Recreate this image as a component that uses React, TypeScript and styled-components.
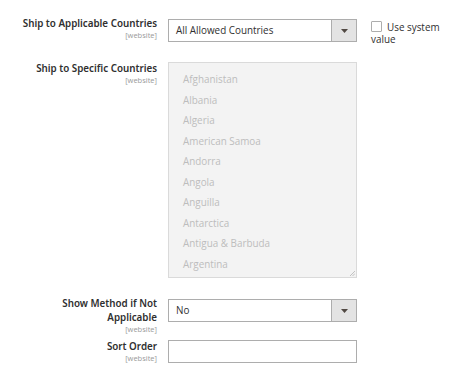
import React from "react";
import styled, { createGlobalStyle } from "styled-components";

const GlobalStyle = createGlobalStyle`
  body {
    margin: 0;
    background: #ffffff;
    font-family: "Open Sans", "Liberation Sans", sans-serif;
    color: #303030;
  }
`;

const Form = styled.div`
  padding: 19px 0 0 0;
  width: 474px;
`;

const Row = styled.div<{ $mb: number }>`
  display: grid;
  grid-template-columns: 157px 189px auto;
  column-gap: 11px;
  align-items: start;
  margin-bottom: ${(p) => p.$mb}px;
`;

const Label = styled.div<{ $offset: number }>`
  text-align: right;
  margin-top: ${(p) => p.$offset}px;
  padding-left: 17px;
  font-family: "Noto Sans", "Open Sans", sans-serif;
  font-size: 9.8px;
  font-weight: 600;
  line-height: 14px;
  color: #303030;
`;

const Scope = styled.div`
  font-family: "Open Sans", sans-serif;
  font-size: 7.5px;
  font-weight: 400;
  line-height: 9px;
  color: #999999;
`;

const SelectBox = styled.div`
  display: flex;
  height: 23px;
  box-sizing: border-box;
  border: 1px solid #adadad;
  background: #ffffff;
`;

const SelectValue = styled.div`
  flex: 1;
  padding-left: 7px;
  font-size: 9.9px;
  line-height: 21px;
  color: #303030;
`;

const SelectArrow = styled.div`
  width: 24px;
  background: #e3e3e3;
  border-left: 1px solid #adadad;
  display: flex;
  align-items: center;
  justify-content: center;
`;

const Multi = styled.div`
  position: relative;
  height: 216px;
  box-sizing: border-box;
  border: 1px solid #dadada;
  background: #f3f3f3;
  padding: 6px 0 0 14px;
`;

const Option = styled.div`
  font-size: 9.9px;
  line-height: 20.5px;
  color: #bdbdbd;
`;

const Grip = styled.svg`
  position: absolute;
  right: 1px;
  bottom: 1px;
`;

const TextInput = styled.div`
  height: 23px;
  box-sizing: border-box;
  border: 1px solid #adadad;
  background: #ffffff;
`;

const SystemValue = styled.label`
  display: block;
  width: 76px;
  padding: 2px 0 0 3px;
  font-size: 9.9px;
  line-height: 12px;
  color: #303030;
`;

const Check = styled.span`
  display: inline-block;
  width: 11px;
  height: 11px;
  box-sizing: border-box;
  border: 1px solid #adadad;
  border-radius: 1px;
  background: #fff;
  vertical-align: -1px;
  margin-right: 5px;
`;

const countries = [
  "Afghanistan",
  "Albania",
  "Algeria",
  "American Samoa",
  "Andorra",
  "Angola",
  "Anguilla",
  "Antarctica",
  "Antigua & Barbuda",
  "Argentina",
];

const Arrow = () => (
  <svg width="7" height="4" viewBox="0 0 7 4">
    <path d="M0 0 L7 0 L3.5 4 Z" fill="#514943" />
  </svg>
);

const Select = ({ value }: { value: string }) => (
  <SelectBox>
    <SelectValue>{value}</SelectValue>
    <SelectArrow>
      <Arrow />
    </SelectArrow>
  </SelectBox>
);

export default function App() {
  return (
    <>
      <GlobalStyle />
      <Form>
        <Row $mb={17}>
          <Label $offset={-2}>
            Ship to Applicable Countries
            <Scope>[website]</Scope>
          </Label>
          <Select value="All Allowed Countries" />
          <SystemValue>
            <Check />
            Use system value
          </SystemValue>
        </Row>
        <Row $mb={21}>
          <Label $offset={0}>
            Ship to Specific Countries
            <Scope>[website]</Scope>
          </Label>
          <Multi>
            {countries.map((c) => (
              <Option key={c}>{c}</Option>
            ))}
            <Grip width="5" height="5" viewBox="0 0 5 5">
              <path d="M5 0 L0 5 M5 2.5 L2.5 5" stroke="#b5b5b5" strokeWidth="0.8" />
            </Grip>
          </Multi>
          <div />
        </Row>
        <Row $mb={6}>
          <Label $offset={-2}>
            Show Method if Not Applicable
            <Scope>[website]</Scope>
          </Label>
          <Select value="No" />
          <div />
        </Row>
        <Row $mb={0}>
          <Label $offset={0}>
            Sort Order
            <Scope>[website]</Scope>
          </Label>
          <TextInput />
          <div />
        </Row>
      </Form>
    </>
  );
}
